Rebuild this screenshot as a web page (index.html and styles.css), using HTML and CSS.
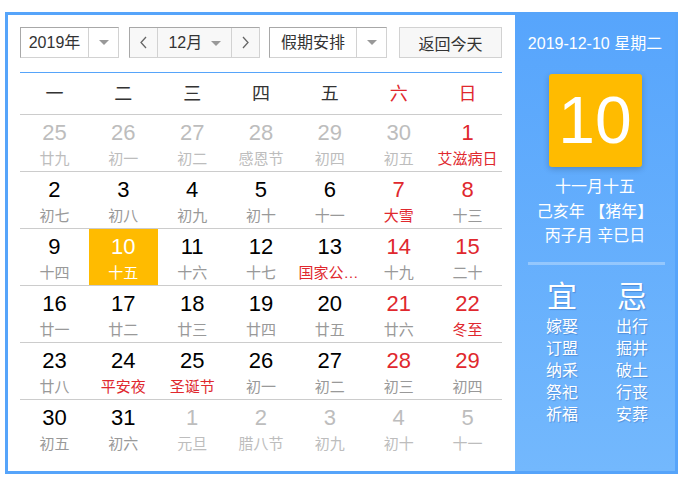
FILE: index.html
```html
<!DOCTYPE html>
<html lang="zh-CN">
<head>
    <meta charset="UTF-8">
    <title>万年历</title>
    <link rel="stylesheet" href="styles.css">
</head>
<body>
    <div class="calendar">
        <div class="main">
            <div class="toolbar">
                <div class="select year-select">
                    <span class="select-text">2019年</span>
                    <span class="select-arrow"><i class="tri"></i></span>
                </div>
                <div class="month-group">
                    <span class="nav-btn">
                        <svg width="7" height="13" viewBox="0 0 7 13"><polyline points="6,1 1,6.5 6,12" fill="none" stroke="#666" stroke-width="1.3"/></svg>
                    </span>
                    <span class="month-text">12月 <i class="tri"></i></span>
                    <span class="nav-btn">
                        <svg width="7" height="13" viewBox="0 0 7 13"><polyline points="1,1 6,6.5 1,12" fill="none" stroke="#666" stroke-width="1.3"/></svg>
                    </span>
                </div>
                <div class="select holiday-select">
                    <span class="select-text">假期安排</span>
                    <span class="select-arrow"><i class="tri"></i></span>
                </div>
                <button class="today-btn">返回今天</button>
            </div>

            <div class="week-head">
                <span>一</span><span>二</span><span>三</span><span>四</span><span>五</span>
                <span class="red">六</span><span class="red">日</span>
            </div>

            <div class="days">
                <div class="week">
                    <div class="day other"><b>25</b><em>廿九</em></div>
                    <div class="day other"><b>26</b><em>初一</em></div>
                    <div class="day other"><b>27</b><em>初二</em></div>
                    <div class="day other"><b>28</b><em>感恩节</em></div>
                    <div class="day other"><b>29</b><em>初四</em></div>
                    <div class="day other"><b>30</b><em>初五</em></div>
                    <div class="day weekend"><b>1</b><em class="fest">艾滋病日</em></div>
                </div>
                <div class="week">
                    <div class="day"><b>2</b><em>初七</em></div>
                    <div class="day"><b>3</b><em>初八</em></div>
                    <div class="day"><b>4</b><em>初九</em></div>
                    <div class="day"><b>5</b><em>初十</em></div>
                    <div class="day"><b>6</b><em>十一</em></div>
                    <div class="day weekend"><b>7</b><em class="fest">大雪</em></div>
                    <div class="day weekend"><b>8</b><em>十三</em></div>
                </div>
                <div class="week">
                    <div class="day"><b>9</b><em>十四</em></div>
                    <div class="day today"><b>10</b><em>十五</em></div>
                    <div class="day"><b>11</b><em>十六</em></div>
                    <div class="day"><b>12</b><em>十七</em></div>
                    <div class="day"><b>13</b><em class="fest">国家公祭日</em></div>
                    <div class="day weekend"><b>14</b><em>十九</em></div>
                    <div class="day weekend"><b>15</b><em>二十</em></div>
                </div>
                <div class="week">
                    <div class="day"><b>16</b><em>廿一</em></div>
                    <div class="day"><b>17</b><em>廿二</em></div>
                    <div class="day"><b>18</b><em>廿三</em></div>
                    <div class="day"><b>19</b><em>廿四</em></div>
                    <div class="day"><b>20</b><em>廿五</em></div>
                    <div class="day weekend"><b>21</b><em>廿六</em></div>
                    <div class="day weekend"><b>22</b><em class="fest">冬至</em></div>
                </div>
                <div class="week">
                    <div class="day"><b>23</b><em>廿八</em></div>
                    <div class="day"><b>24</b><em class="fest">平安夜</em></div>
                    <div class="day"><b>25</b><em class="fest">圣诞节</em></div>
                    <div class="day"><b>26</b><em>初一</em></div>
                    <div class="day"><b>27</b><em>初二</em></div>
                    <div class="day weekend"><b>28</b><em>初三</em></div>
                    <div class="day weekend"><b>29</b><em>初四</em></div>
                </div>
                <div class="week">
                    <div class="day"><b>30</b><em>初五</em></div>
                    <div class="day"><b>31</b><em>初六</em></div>
                    <div class="day other"><b>1</b><em>元旦</em></div>
                    <div class="day other"><b>2</b><em>腊八节</em></div>
                    <div class="day other"><b>3</b><em>初九</em></div>
                    <div class="day other"><b>4</b><em>初十</em></div>
                    <div class="day other"><b>5</b><em>十一</em></div>
                </div>
            </div>
        </div>

        <div class="side">
            <div class="side-date">2019-12-10 星期二</div>
            <div class="big-day">10</div>
            <div class="lunar-info">
                <div>十一月十五</div>
                <div>己亥年 【猪年】</div>
                <div>丙子月 辛巳日</div>
            </div>
            <div class="side-line"></div>
            <div class="almanac">
                <div class="alm-col">
                    <div class="alm-title">宜</div>
                    <div>嫁娶</div>
                    <div>订盟</div>
                    <div>纳采</div>
                    <div>祭祀</div>
                    <div>祈福</div>
                </div>
                <div class="alm-col">
                    <div class="alm-title">忌</div>
                    <div>出行</div>
                    <div>掘井</div>
                    <div>破土</div>
                    <div>行丧</div>
                    <div>安葬</div>
                </div>
            </div>
        </div>
    </div>
</body>
</html>
```

FILE: styles.css
```css
body {
    margin: 0;
    padding: 12px 5px;
    background-color: #ffffff;
    font-family: "Liberation Sans", Arial, "Noto Sans CJK SC", sans-serif;
    color: #000;
}
.calendar {
    display: flex;
    width: 667px;
    height: 456px;
    border: 3px solid #56a4fa;
}
.main {
    width: 482px;
    padding: 12px 13px 0 12px;
    background: #fff;
}

/* toolbar */
.toolbar {
    display: flex;
    height: 31px;
    font-size: 16px;
    color: #333;
}
.select {
    display: flex;
    box-sizing: border-box;
    height: 31px;
    border: 1px solid;
    border-color: #a8a8a8 #d2d2d2 #d2d2d2 #a8a8a8;
    background: #fff;
}
.year-select {
    width: 99px;
}
.holiday-select {
    width: 118px;
    margin-left: 9px;
}
.select-text {
    flex: 1;
    line-height: 29px;
    text-align: center;
}
.select-arrow {
    width: 29px;
    border-left: 1px solid #d2d2d2;
    display: flex;
    align-items: center;
    justify-content: center;
}
.tri {
    display: inline-block;
    width: 0;
    height: 0;
    border-left: 5px solid transparent;
    border-right: 5px solid transparent;
    border-top: 5px solid #999;
    vertical-align: middle;
}
.month-group {
    display: flex;
    box-sizing: border-box;
    width: 131px;
    height: 31px;
    margin-left: 10px;
    border: 1px solid;
    border-color: #a8a8a8 #d2d2d2 #d2d2d2 #a8a8a8;
    background: #f8f8f8;
}
.nav-btn {
    width: 27px;
    display: flex;
    align-items: center;
    justify-content: center;
}
.month-text {
    flex: 1;
    line-height: 29px;
    text-align: center;
    border-left: 1px solid #d2d2d2;
    border-right: 1px solid #d2d2d2;
}
.month-text .tri {
    margin-left: 4px;
}
.today-btn {
    box-sizing: border-box;
    width: 103px;
    height: 31px;
    margin-left: 12px;
    border: 1px solid #d2d2d2;
    background: #f7f7f7;
    font-family: inherit;
    font-size: 16px;
    color: #333;
    padding: 0;
}

/* week header */
.week-head {
    display: grid;
    grid-template-columns: repeat(7, 1fr);
    margin-top: 14px;
    border-top: 1px solid #56a4fa;
    height: 41px;
    line-height: 42px;
    text-align: center;
    font-size: 18px;
    color: #333;
}
.week-head .red {
    color: #e0282e;
}

/* days */
.week {
    display: grid;
    grid-template-columns: repeat(7, 1fr);
    border-top: 1px solid #cccccc;
    height: 56px;
}
.day {
    text-align: center;
    overflow: hidden;
    padding: 0 3px;
}
.day b {
    display: block;
    font-weight: normal;
    font-size: 22px;
    line-height: 26px;
    padding-top: 5px;
    color: #000;
}
.day em {
    display: block;
    font-style: normal;
    font-size: 15px;
    line-height: 20px;
    margin-top: 3px;
    color: #999;
    white-space: nowrap;
    overflow: hidden;
    text-overflow: ellipsis;
}
.day em.fest {
    color: #e0282e;
}
.day.weekend b {
    color: #e0282e;
}
.day.other b,
.day.other em {
    color: #bdbdbd;
}
.day.today {
    background: #ffbb00;
}
.day.today b,
.day.today em {
    color: #fff;
}

/* side panel */
.side {
    width: 160px;
    background: linear-gradient(#57a5fc, #73b8fd);
    color: #fff;
    text-align: center;
}
.side-date {
    font-size: 16px;
    line-height: 20px;
    padding-top: 19px;
}
.big-day {
    width: 93px;
    height: 93px;
    margin: 20px auto 0;
    background: #ffbb00;
    border-radius: 3px;
    box-shadow: 0 2px 6px rgba(0, 0, 0, 0.2);
    font-size: 66px;
    line-height: 93px;
}
.lunar-info {
    margin-top: 8px;
    font-size: 16px;
    line-height: 24.5px;
}
.side-line {
    height: 3px;
    margin: 13px 10px 0 13px;
    background: rgba(255, 255, 255, 0.3);
}
.almanac {
    display: flex;
    justify-content: center;
    gap: 10px;
    padding-left: 4px;
    margin-top: 15px;
    font-size: 16px;
    line-height: 22px;
    text-shadow: 1px 1px 1px rgba(0, 40, 120, 0.25);
}
.alm-col {
    width: 60px;
}
.alm-title {
    font-size: 30px;
    line-height: 34px;
    margin-bottom: 2px;
}
```
